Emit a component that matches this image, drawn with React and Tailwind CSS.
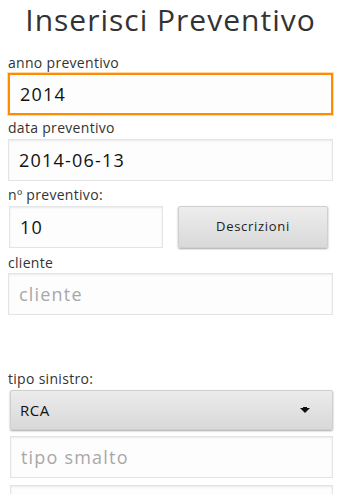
import React from "react";

const Label = ({ children, className = "" }) => (
  <div className={`text-[14px] leading-[16px] tracking-[0.3px] text-[#333] ${className}`}>{children}</div>
);

const Field = ({ value, placeholder, focused = false, className = "" }) => (
  <div
    className={`
      flex items-center h-[42px] px-[10px] bg-[#fdfdfd] text-[18px] tracking-[1.2px]
      ${focused
        ? "border-2 border-[#ff8c00] shadow-[0_0_0_1px_rgba(255,170,60,0.45)]"
        : "border border-[#e4e4e4] shadow-[inset_0_1px_2px_rgba(0,0,0,0.08)]"}
      ${className}
    `}
  >
    {value ? (
      <span className="text-[#111]">{value}</span>
    ) : (
      <span className="text-[#a8a8a8]">{placeholder}</span>
    )}
  </div>
);

export default function App() {
  return (
    <div className="w-[346px] h-[494px] overflow-hidden bg-white font-['Open_Sans',sans-serif]">
      <div className="flex flex-col pl-[8px] pr-[13px]">
        {/* heading */}
        <h1 className="text-center text-[30px] leading-[40px] tracking-[1px] text-[#333]">
          Inserisci Preventivo
        </h1>

        <Label className="mt-[15px]">anno preventivo</Label>
        <Field value="2014" focused className="mt-[2px] h-[41px]" />

        <Label className="mt-[5px]">data preventivo</Label>
        <Field value="2014-06-13" className="mt-[3px]" />

        <Label className="mt-[6px]">nº preventivo:</Label>
        <div className="flex items-center mt-[3px]">
          <Field value="10" className="w-[154px] h-[40px] ml-[1px]" />
          <button
            className="
              ml-[15px] w-[150px] h-[42px] text-[13px] tracking-[0.7px] text-[#222]
              bg-gradient-to-b from-[#ededed] to-[#d9d9d9]
              border border-[#d0d0d0] rounded-[2px]
              shadow-[0_1px_2px_rgba(0,0,0,0.35)]
            "
          >
            Descrizioni
          </button>
        </div>

        <Label className="mt-[7px]">cliente</Label>
        <Field placeholder="cliente" className="mt-[2px]" />

        <Label className="mt-[56px]">tipo sinistro:</Label>
        <div
          className="
            flex items-center justify-between mt-[3px] ml-[2px] h-[40px] pl-[9px] pr-[22px]
            bg-gradient-to-b from-[#ececec] to-[#d8d8d8]
            border border-[#cfcfcf] rounded-[2px]
            shadow-[0_1px_2px_rgba(0,0,0,0.35)]
            text-[15px] tracking-[0.5px] text-[#111]
          "
        >
          <span>RCA</span>
          <svg width="10" height="7" viewBox="0 0 10 7">
            <path d="M0 1h10L5 6z" fill="#111" />
            <rect x="3" y="0" width="4" height="1" fill="#111" />
          </svg>
        </div>

        <Field placeholder="tipo smalto" className="mt-[6px] ml-[2px]" />
        <Field placeholder="" className="mt-[7px] ml-[2px]" />
      </div>
    </div>
  );
}
